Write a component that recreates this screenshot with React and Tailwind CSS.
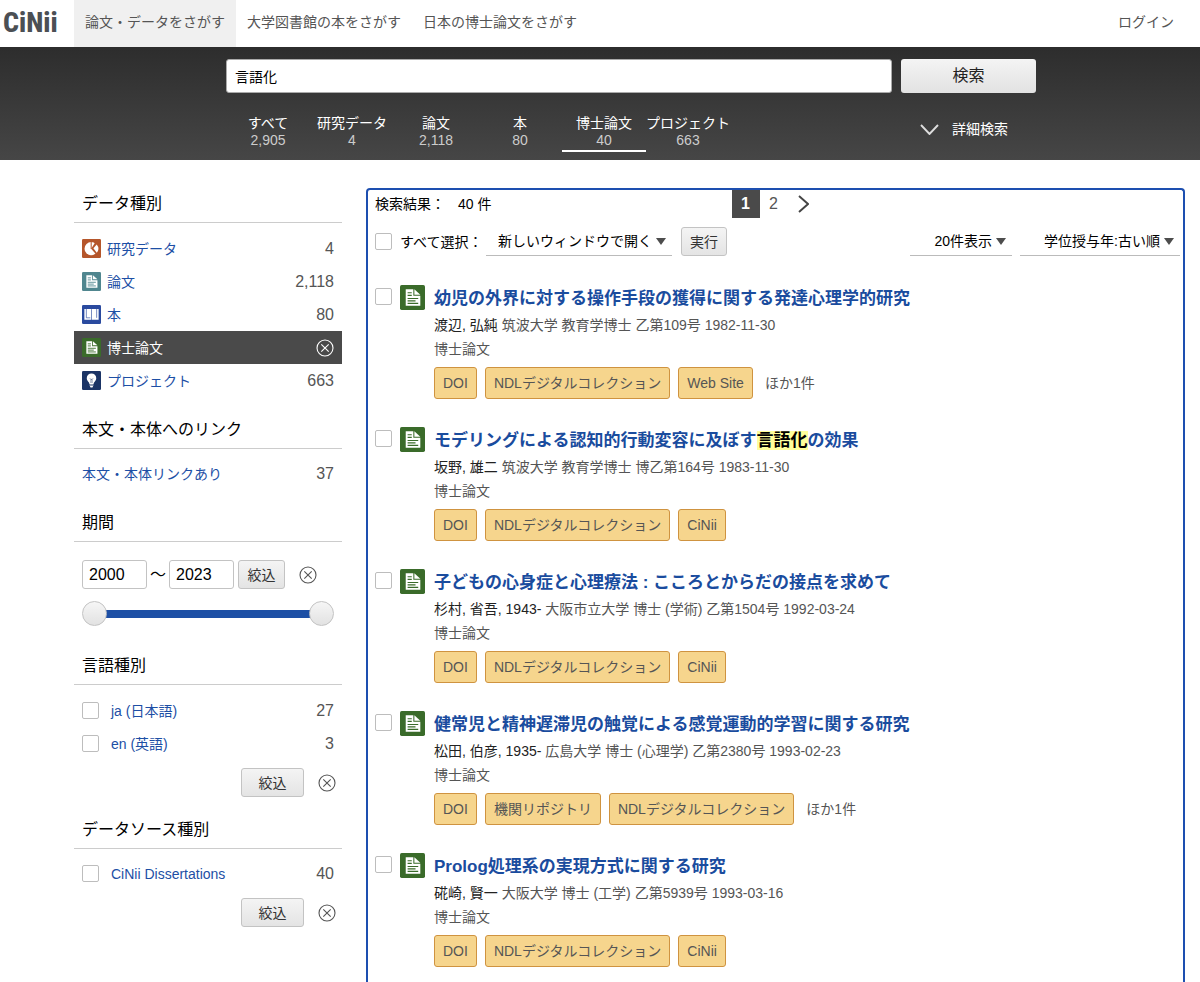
import { useState } from 'react';

const navLinks = ['論文・データをさがす', '大学図書館の本をさがす', '日本の博士論文をさがす'];

const tabs = [
  { label: 'すべて', count: '2,905' },
  { label: '研究データ', count: '4' },
  { label: '論文', count: '2,118' },
  { label: '本', count: '80' },
  { label: '博士論文', count: '40', active: true },
  { label: 'プロジェクト', count: '663' },
];

const dataTypes = [
  { label: '研究データ', count: '4', kind: 'data' },
  { label: '論文', count: '2,118', kind: 'paper' },
  { label: '本', count: '80', kind: 'book' },
  { label: '博士論文', kind: 'thesis', active: true },
  { label: 'プロジェクト', count: '663', kind: 'project' },
];

const results = [
  {
    title: ['幼児の外界に対する操作手段の獲得に関する発達心理学的研究'],
    author: '渡辺, 弘純',
    meta: '筑波大学 教育学博士 乙第109号 1982-11-30',
    links: ['DOI', 'NDLデジタルコレクション', 'Web Site'],
    more: 'ほか1件',
  },
  {
    title: ['モデリングによる認知的行動変容に及ぼす', '言語化', 'の効果'],
    author: '坂野, 雄二',
    meta: '筑波大学 教育学博士 博乙第164号 1983-11-30',
    links: ['DOI', 'NDLデジタルコレクション', 'CiNii'],
  },
  {
    title: ['子どもの心身症と心理療法 : こころとからだの接点を求めて'],
    author: '杉村, 省吾, 1943-',
    meta: '大阪市立大学 博士 (学術) 乙第1504号 1992-03-24',
    links: ['DOI', 'NDLデジタルコレクション', 'CiNii'],
  },
  {
    title: ['健常児と精神遅滞児の触覚による感覚運動的学習に関する研究'],
    author: '松田, 伯彦, 1935-',
    meta: '広島大学 博士 (心理学) 乙第2380号 1993-02-23',
    links: ['DOI', '機関リポジトリ', 'NDLデジタルコレクション'],
    more: 'ほか1件',
  },
  {
    title: ['Prolog処理系の実現方式に関する研究'],
    author: '硴崎, 賢一',
    meta: '大阪大学 博士 (工学) 乙第5939号 1993-03-16',
    links: ['DOI', 'NDLデジタルコレクション', 'CiNii'],
  },
];

const kindColors = {
  data: 'text-[#b5562b]',
  paper: 'text-[#50868f]',
  book: 'text-[#2a4a9f]',
  thesis: 'text-[#3a6b2a]',
  project: 'text-[#1b3466]',
};

function KindIcon({ kind, className }) {
  return (
    <svg viewBox="0 0 24 24" aria-hidden="true" className={`shrink-0 ${kindColors[kind]} ${className}`}>
      <rect width="24" height="24" rx="1.6" fill="currentColor" />
      {kind === 'data' && (
        <>
          <circle cx="11.600" cy="12.200" r="8.400" fill="#fff" />
          <path d="M11.600 12.200L17.800 2.500 22.500 8 21 17l-3.400 2.400z" fill="currentColor" />
          <path d="M14.400 11.600L18.600 6.800a8.400 8.400 0 0 1 0 10.600z" fill="#fff" />
          <path d="M11.600 12.600V3" stroke="currentColor" strokeWidth="1.300" />
        </>
      )}
      {(kind === 'paper' || kind === 'thesis') && (
        <>
          <path d="M5.500 4h7.300v6.300h6.700V20h-14z" fill="#fff" />
          <path d="M13.800 4l5.700 5.300h-5.700z" fill="#fff" />
          <path d="M7.300 7.400h4M7.300 10h4M7.300 13h10.200M7.300 15.300h7.600M7.300 17.600h10.200" stroke="currentColor" strokeWidth="1.100" />
        </>
      )}
      {kind === 'book' && (
        <>
          <path d="M3 5h8.500l.5.8.500-.8H21v13.500h-8.500l-.5.6-.5-.6H3z" fill="#fff" />
          <path d="M12 5.500v13.500M5.500 5v11.200h5M18.500 5v11.200" fill="none" stroke="currentColor" strokeWidth=".8" />
        </>
      )}
      {kind === 'project' && (
        <>
          <path
            d="M12 3a6 6 0 0 0-6 6c0 2.400 1.500 3.600 2.500 5.100.5.800.8 1.400.8 2.200h5.400c0-.8.3-1.400.8-2.200 1-1.500 2.500-2.700 2.500-5.100A6 6 0 0 0 12 3z"
            fill="#fff"
          />
          <path d="M9.500 17h5v1.300h-5zM9.900 19h4.200l-.9 1.900h-2.400z" fill="#fff" />
          <path d="M10 9.200l1.200 1.400h1.600L14 9.200M11.200 10.600v4.600M12.800 10.600v4.600" fill="none" stroke="currentColor" strokeWidth=".6" />
        </>
      )}
    </svg>
  );
}

function ClearIcon() {
  return (
    <svg viewBox="0 0 18 18" className="size-[18px]" fill="none" stroke="currentColor" strokeWidth="1.1" aria-hidden="true">
      <circle cx="9" cy="9" r="8" />
      <path d="M5.300 5.300l7.400 7.400M12.700 5.300l-7.400 7.400" />
    </svg>
  );
}

function ClearButton({ className = '' }) {
  return (
    <button type="button" aria-label="クリア" className={`flex size-[18px] items-center justify-center text-[#555] ${className}`}>
      <ClearIcon />
    </button>
  );
}

function GrayButton({ children, className }) {
  return (
    <button
      type="button"
      className={`h-[29px] rounded-[3px] border border-[#c3c3c3] bg-linear-to-b from-[#f4f4f4] to-[#e4e4e4] text-sm text-[#333] ${className}`}
    >
      {children}
    </button>
  );
}

function Check({ label, id }) {
  return (
    <input
      type="checkbox"
      id={id}
      aria-label={label}
      className="size-[17px] shrink-0 appearance-none rounded-[2px] border border-[#bdbdbd] bg-white checked:bg-[#1d4fa5]"
    />
  );
}

function Dropdown({ label, options, className }) {
  return (
    <div className={`relative h-[29px] border-b border-[#bbb] ${className}`}>
      <select
        aria-label={label}
        className="h-full w-full appearance-none bg-transparent pr-5 text-right text-sm text-black outline-none [text-align-last:right]"
      >
        {options.map((o) => (
          <option key={o}>{o}</option>
        ))}
      </select>
      <svg viewBox="0 0 10 7" className="pointer-events-none absolute top-[11px] right-[6px] h-[7px] w-[10px]" aria-hidden="true">
        <path d="M0 0h10L5 7z" fill="#4d4d4d" />
      </svg>
    </div>
  );
}

function Section({ title, children }) {
  return (
    <section>
      <h2 className="border-b border-[#ccc] px-2 pb-[6px] text-base leading-6 text-black">{title}</h2>
      {children}
    </section>
  );
}

function CheckRow({ id, label, count }) {
  return (
    <li className="flex h-[33px] items-center px-2">
      <Check id={id} />
      <label htmlFor={id} className="ml-3 flex-1 text-[#1d4fa5]">
        {label}
      </label>
      <span className="text-base">{count}</span>
    </li>
  );
}

function FilterActions() {
  return (
    <div className="mt-2 flex items-center justify-end pr-[6px]">
      <GrayButton className="w-[63px]">絞込</GrayButton>
      <ClearButton className="ml-[14px]" />
    </div>
  );
}

const thumb =
  'pointer-events-none absolute inset-0 h-[25px] w-full appearance-none bg-transparent [&::-webkit-slider-thumb]:pointer-events-auto [&::-webkit-slider-thumb]:size-[25px] [&::-webkit-slider-thumb]:appearance-none [&::-webkit-slider-thumb]:rounded-full [&::-webkit-slider-thumb]:border [&::-webkit-slider-thumb]:border-solid [&::-webkit-slider-thumb]:border-[#c3c3c3] [&::-webkit-slider-thumb]:bg-linear-to-b [&::-webkit-slider-thumb]:from-[#f6f6f6] [&::-webkit-slider-thumb]:to-[#e2e2e2]';

const yearBox = 'h-[29px] w-[65px] rounded-[3px] border border-[#c3c3c3] bg-white px-[6px] text-base text-black';

function PeriodFilter() {
  const [from, setFrom] = useState('2000');
  const [to, setTo] = useState('2023');
  return (
    <div className="px-2 pt-[18px]">
      <div className="flex items-center">
        <input aria-label="開始年" value={from} onChange={(e) => setFrom(e.target.value)} className={yearBox} />
        <span className="w-[22px] text-center text-base text-black">～</span>
        <input aria-label="終了年" value={to} onChange={(e) => setTo(e.target.value)} className={yearBox} />
        <GrayButton className="ml-1 w-[47px]">絞込</GrayButton>
        <ClearButton className="ml-[14px]" />
      </div>
      <div className="relative mt-3 mb-[7px] flex h-[25px] items-center">
        <div className="mx-3 h-2 flex-1 bg-[#1d4fa5]" />
        <input type="range" aria-label="開始年スライダー" min="2000" max="2023" value={from} onChange={(e) => setFrom(e.target.value)} className={thumb} />
        <input type="range" aria-label="終了年スライダー" min="2000" max="2023" value={to} onChange={(e) => setTo(e.target.value)} className={thumb} />
      </div>
    </div>
  );
}

function Sidebar() {
  return (
    <aside className="flex w-[268px] shrink-0 flex-col gap-[21px] pt-1 text-sm text-[#555]">
      <Section title="データ種別">
        <ul className="pt-[9px] text-base">
          {dataTypes.map((d) => (
            <li key={d.label} className={`flex h-[33px] items-center px-2 ${d.active ? 'bg-[#4a4a4a] text-white' : ''}`}>
              <KindIcon kind={d.kind} className="mr-[6px] size-[19px]" />
              <a href="#" className={`flex-1 text-sm ${d.active ? 'text-white' : 'text-[#1d4fa5]'}`}>
                {d.label}
              </a>
              {d.active ? (
                <button type="button" aria-label="解除">
                  <ClearIcon />
                </button>
              ) : (
                <span>{d.count}</span>
              )}
            </li>
          ))}
        </ul>
      </Section>
      <Section title="本文・本体へのリンク">
        <ul className="pt-2">
          <li className="flex h-[33px] items-center px-2">
            <a href="#" className="flex-1 text-[#1d4fa5]">
              本文・本体リンクあり
            </a>
            <span className="text-base">37</span>
          </li>
        </ul>
      </Section>
      <Section title="期間">
        <PeriodFilter />
      </Section>
      <Section title="言語種別">
        <ul className="pt-[9px]">
          <CheckRow id="lang-ja" label="ja (日本語)" count="27" />
          <CheckRow id="lang-en" label="en (英語)" count="3" />
        </ul>
        <FilterActions />
      </Section>
      <Section title="データソース種別">
        <ul className="pt-2">
          <CheckRow id="src-diss" label="CiNii Dissertations" count="40" />
        </ul>
        <FilterActions />
      </Section>
    </aside>
  );
}

function Result({ item }) {
  return (
    <li className="flex items-start pb-[27px] pl-[7px]">
      <div className="flex h-[25px] items-center">
        <Check label={item.title.join('')} />
      </div>
      <KindIcon kind="thesis" className="mt-px ml-2 size-[25px]" />
      <div className="ml-[9px] min-w-0 flex-1 pt-px text-sm leading-6 text-[#555]">
        <h3 className="text-[17px] leading-7 font-bold">
          <a href="#" className="text-[#1a4c9e]">
            {item.title[0]}
            {item.title[1] && <mark className="bg-[#ffff9b] text-black">{item.title[1]}</mark>}
            {item.title[2]}
          </a>
        </h3>
        <p>
          <span className="text-[#222]">{item.author}</span> {item.meta}
        </p>
        <p>博士論文</p>
        <div className="mt-[6px] flex flex-wrap items-center gap-2">
          {item.links.map((l) => (
            <a key={l} href="#" className="flex h-8 items-center rounded-[3px] border border-[#cf9340] bg-[#f6d58d] px-2">
              {l}
            </a>
          ))}
          {item.more && <span className="ml-1">{item.more}</span>}
        </div>
      </div>
    </li>
  );
}

export default function App() {
  return (
    <div className="bg-white font-['Liberation_Sans','Noto_Sans_CJK_JP',sans-serif] text-sm text-[#555]">
      <nav className="flex h-[47px] items-stretch">
        <a href="#" className="flex w-[74px] items-center pb-px pl-[3px] font-['Roboto_Condensed','Roboto',sans-serif] text-[28px] leading-none font-extrabold text-[#4b4f54]">
          CiNii
        </a>
        {navLinks.map((l, i) => (
          <a key={l} href="#" className={`flex items-center px-[11px] pb-1 ${i === 0 ? 'bg-[#f0f0f0]' : ''}`}>
            {l}
          </a>
        ))}
        <a href="#" className="mr-[26px] ml-auto flex items-center pb-1">
          ログイン
        </a>
      </nav>

      <header className="bg-linear-to-b from-[#2d2d2d] to-[#464646] pr-[164px] pl-[226px]">
        <form className="flex gap-[9px] pt-3" onSubmit={(e) => e.preventDefault()}>
          <input
            aria-label="フリーワード"
            defaultValue="言語化"
            className="h-[34px] min-w-0 flex-1 rounded-[3px] border border-[#aaa] bg-white px-2 text-sm text-black"
          />
          <button type="submit" className="h-[34px] w-[135px] rounded-[3px] bg-linear-to-b from-[#f4f4f4] to-[#e2e2e2] text-base text-[#222]">
            検索
          </button>
        </form>
        <div className="flex h-[67px] items-start pt-[22px]">
          <div className="flex flex-1">
            {tabs.map((t) => (
              <a
                key={t.label}
                href="#"
                className={`flex w-21 shrink-0 flex-col items-center border-b-2 pb-px leading-[17px] whitespace-nowrap ${t.active ? 'border-white' : 'border-transparent'}`}
              >
                <span className="text-white">{t.label}</span>
                <span className="text-[#ccc]">{t.count}</span>
              </a>
            ))}
          </div>
          <button type="button" className="mt-1 mr-7 flex items-center gap-[13px] text-white">
            <svg viewBox="0 0 19 11" className="h-[11px] w-[19px]" fill="none" stroke="#ddd" strokeWidth="1.9" aria-hidden="true">
              <path d="M1 1l8.500 9L18 1" />
            </svg>
            詳細検索
          </button>
        </div>
      </header>

      <main className="flex gap-[24px] pt-[28px] pr-[15px] pl-[74px]">
        <Sidebar />
        <section className="min-w-0 flex-1 rounded-[4px] border-2 border-b-0 border-[#1d4fb0]">
          <div className="grid grid-cols-[1fr_auto_1fr] px-[7px]">
            <p className="flex items-center text-black">
              検索結果：<span className="ml-[13px]">40 件</span>
            </p>
            <div className="flex h-7 items-stretch text-base">
              <span className="flex w-7 items-center justify-center bg-[#4a4a4a] font-bold text-white">1</span>
              <a href="#" className="flex w-7 items-center justify-center">
                2
              </a>
              <a href="#" aria-label="次のページ" className="flex w-8 items-center justify-center">
                <svg viewBox="0 0 11 18" className="h-[18px] w-[11px]" fill="none" stroke="#444" strokeWidth="1.9" aria-hidden="true">
                  <path d="M1 1l9 8-9 8" />
                </svg>
              </a>
            </div>
          </div>
          <div className="mt-[9px] flex items-center pr-[3px] pl-[7px] text-black">
            <Check id="select-all" />
            <label htmlFor="select-all" className="ml-2 w-[86px] whitespace-nowrap">
              すべて選択：
            </label>
            <Dropdown label="操作" options={['新しいウィンドウで開く']} className="w-[186px]" />
            <GrayButton className="ml-[9px] w-[46px]">実行</GrayButton>
            <Dropdown label="表示件数" options={['20件表示']} className="ml-auto w-[102px]" />
            <Dropdown label="並び順" options={['学位授与年:古い順']} className="ml-2 w-[160px]" />
          </div>
          <ul className="mt-[28px]">
            {results.map((r) => (
              <Result key={r.title[0]} item={r} />
            ))}
          </ul>
        </section>
      </main>
    </div>
  );
}
